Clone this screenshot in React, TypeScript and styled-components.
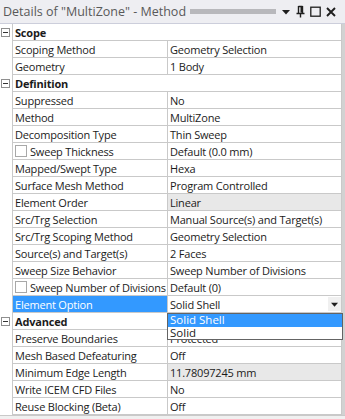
import React from 'react';
import styled, { createGlobalStyle } from 'styled-components';

const GlobalStyle = createGlobalStyle`
  html, body {
    margin: 0;
    padding: 0;
    background: #ffffff;
  }
  body {
    font-family: "Open Sans", "Liberation Sans", sans-serif;
  }
`;

const Panel = styled.div`
  width: 345px;
  height: 419px;
  display: flex;
  flex-direction: column;
  background: #ffffff;
  overflow: hidden;
  position: relative;
  font-size: 11px;
  letter-spacing: -0.2px;
  color: #1b1b1b;
`;

const TitleBar = styled.div`
  height: 23px;
  flex: none;
  display: flex;
  align-items: center;
  background: #eeeef2;
  border-bottom: 1px solid #cccedb;
  padding: 0 7px 0 3px;
`;

const Title = styled.span`
  font-size: 12.5px;
  letter-spacing: 0;
  color: #595959;
  white-space: nowrap;
  margin-right: 4px;
`;

const Grip = styled.div`
  flex: 1;
  height: 5px;
  margin-right: 2px;
  background-image: radial-gradient(circle, #b4b4b8 0.7px, transparent 0.8px);
  background-size: 2px 2px;
`;

const IconSlot = styled.div`
  width: 15px;
  height: 16px;
  flex: none;
  display: flex;
  align-items: center;
  justify-content: center;
`;

const Glyph = styled.svg`
  display: block;
  flex: none;
`;

const Table = styled.div`
  display: flex;
  flex-direction: column;
  border-right: 3px solid #d2d2d2;
  flex: none;
  width: 342px;
`;

const Row = styled.div`
  display: grid;
  grid-template-columns: 12px 155px 175px;
  height: 17px;
`;

const Gutter = styled.div`
  display: flex;
  align-items: center;
  justify-content: center;
  padding-right: 2px;
`;

const Expander = styled.div`
  width: 7px;
  height: 7px;
  border: 1px solid #8f8f8f;
  background: #fff;
  position: relative;
  &::after {
    content: '';
    position: absolute;
    left: 1px;
    right: 1px;
    top: 3px;
    height: 1px;
    background: #333;
  }
`;

const Cell = styled.div<{ $selected?: boolean; $readOnly?: boolean; $span?: boolean }>`
  grid-column: ${(p) => (p.$span ? 'span 2' : 'auto')};
  border-left: 1px solid #c9c9c9;
  border-bottom: 1px solid #c9c9c9;
  display: flex;
  align-items: center;
  gap: 3px;
  padding-left: 2px;
  white-space: nowrap;
  overflow: hidden;
  background: ${(p) => (p.$selected ? '#3399ff' : p.$readOnly ? '#e8e8e8' : '#ffffff')};
  color: ${(p) => (p.$selected ? '#ffffff' : '#1b1b1b')};
  font-weight: ${(p) => (p.$span ? 700 : 400)};
  &:last-child {
    border-right: 1px solid #c9c9c9;
  }
`;

const Check = styled.span`
  width: 10px;
  height: 10px;
  border: 1px solid #a8a8a8;
  background: #fff;
  flex: none;
`;

const Combo = styled.div`
  flex: 1;
  height: 100%;
  display: flex;
  align-items: center;
  justify-content: space-between;
`;

const ArrowButton = styled.div`
  width: 13px;
  height: 14px;
  display: flex;
  align-items: center;
  justify-content: center;
  background: #f0f0f0;
`;

const DropList = styled.div`
  position: absolute;
  top: 313px;
  left: 167px;
  width: 174px;
  border: 1px solid #646464;
  background: #ffffff;
  font-size: 11.5px;
  letter-spacing: 0;
`;

const DropItem = styled.div<{ $active?: boolean }>`
  height: 12.5px;
  line-height: 12.5px;
  padding-left: 2px;
  background: ${(p) => (p.$active ? '#3399ff' : '#ffffff')};
  color: ${(p) => (p.$active ? '#ffffff' : '#1b1b1b')};
`;

const BottomStrip = styled.div`
  flex: 1;
  background: #f0f0f0;
  border-top: 1px solid #c9c9c9;
`;

type Item =
  | { kind: 'header'; label: string }
  | { kind: 'prop'; name: string; value: string; check?: boolean; readOnly?: boolean; selected?: boolean; combo?: boolean };

const rows: Item[] = [
  { kind: 'header', label: 'Scope' },
  { kind: 'prop', name: 'Scoping Method', value: 'Geometry Selection' },
  { kind: 'prop', name: 'Geometry', value: '1 Body' },
  { kind: 'header', label: 'Definition' },
  { kind: 'prop', name: 'Suppressed', value: 'No' },
  { kind: 'prop', name: 'Method', value: 'MultiZone' },
  { kind: 'prop', name: 'Decomposition Type', value: 'Thin Sweep' },
  { kind: 'prop', name: 'Sweep Thickness', value: 'Default (0.0 mm)', check: true },
  { kind: 'prop', name: 'Mapped/Swept Type', value: 'Hexa' },
  { kind: 'prop', name: 'Surface Mesh Method', value: 'Program Controlled' },
  { kind: 'prop', name: 'Element Order', value: 'Linear', readOnly: true },
  { kind: 'prop', name: 'Src/Trg Selection', value: 'Manual Source(s) and Target(s)' },
  { kind: 'prop', name: 'Src/Trg Scoping Method', value: 'Geometry Selection' },
  { kind: 'prop', name: 'Source(s) and Target(s)', value: '2 Faces' },
  { kind: 'prop', name: 'Sweep Size Behavior', value: 'Sweep Number of Divisions' },
  { kind: 'prop', name: 'Sweep Number of Divisions', value: 'Default (0)', check: true },
  { kind: 'prop', name: 'Element Option', value: 'Solid Shell', selected: true, combo: true },
  { kind: 'header', label: 'Advanced' },
  { kind: 'prop', name: 'Preserve Boundaries', value: 'Protected' },
  { kind: 'prop', name: 'Mesh Based Defeaturing', value: 'Off' },
  { kind: 'prop', name: 'Minimum Edge Length', value: '11.78097245 mm', readOnly: true },
  { kind: 'prop', name: 'Write ICEM CFD Files', value: 'No' },
  { kind: 'prop', name: 'Reuse Blocking (Beta)', value: 'Off' },
];

const DownTriangle = ({ size = 7 }: { size?: number }) => (
  <Glyph width={size} height={size} viewBox="0 0 8 8">
    <path d="M0 2 L8 2 L4 6.5 Z" fill="#1e1e1e" />
  </Glyph>
);

const PinIcon = () => (
  <Glyph width={9} height={13} viewBox="0 0 9 13">
    <path d="M2.5 1 V8 M6.5 1 V8 M2.5 1.5 H6.5 M5.2 1.5 V7.5 M0.5 8.5 H8.5 M4.5 9 V12.5" stroke="#1e1e1e" strokeWidth="1.4" fill="none" />
  </Glyph>
);

const MaxIcon = () => (
  <Glyph width={11} height={11} viewBox="0 0 11 11">
    <rect x="0.8" y="1.2" width="9.4" height="9" stroke="#1e1e1e" strokeWidth="1.3" fill="none" />
  </Glyph>
);

const CloseIcon = () => (
  <Glyph width={10} height={10} viewBox="0 0 10 10">
    <path d="M1 1 L9 9 M9 1 L1 9" stroke="#1e1e1e" strokeWidth="1.9" />
  </Glyph>
);

export default function App() {
  return (
    <>
      <GlobalStyle />
      <Panel>
        <TitleBar>
          <Title>Details of "MultiZone" - Method</Title>
          <Grip />
          <IconSlot>
            <DownTriangle size={8} />
          </IconSlot>
          <IconSlot>
            <PinIcon />
          </IconSlot>
          <IconSlot>
            <MaxIcon />
          </IconSlot>
          <IconSlot>
            <CloseIcon />
          </IconSlot>
        </TitleBar>
        <Table>
          {rows.map((r, i) =>
            r.kind === 'header' ? (
              <Row key={i}>
                <Gutter>
                  <Expander />
                </Gutter>
                <Cell $span>{r.label}</Cell>
              </Row>
            ) : (
              <Row key={i}>
                <Gutter />
                <Cell $selected={r.selected}>
                  {r.check && <Check />}
                  {r.name}
                </Cell>
                <Cell $readOnly={r.readOnly}>
                  {r.combo ? (
                    <Combo>
                      {r.value}
                      <ArrowButton>
                        <DownTriangle />
                      </ArrowButton>
                    </Combo>
                  ) : (
                    r.value
                  )}
                </Cell>
              </Row>
            )
          )}
        </Table>
        <BottomStrip />
        <DropList>
          <DropItem $active>Solid Shell</DropItem>
          <DropItem>Solid</DropItem>
        </DropList>
      </Panel>
    </>
  );
}
